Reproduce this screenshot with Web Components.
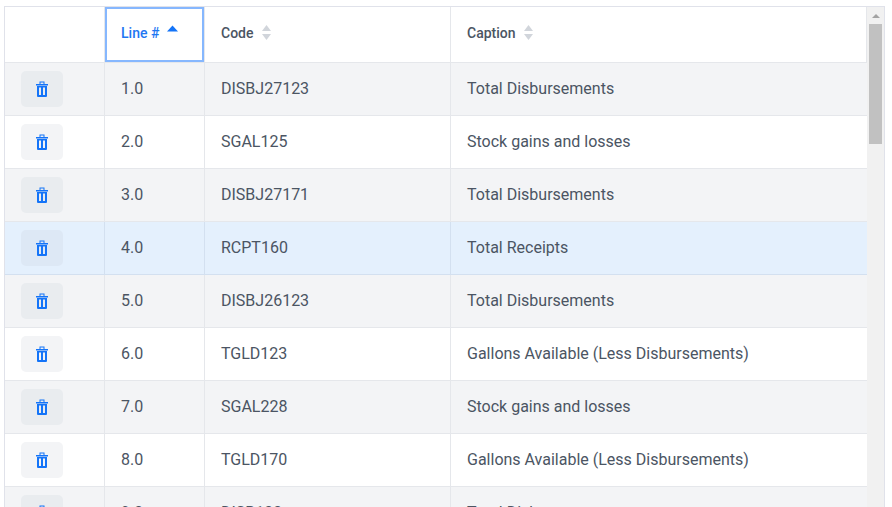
<!DOCTYPE html>
<html>
<head>
<meta charset="utf-8">
<style>
    html, body { margin: 0; height: 100%; overflow: hidden; background: #fff; }
    body { padding: 6px 7px 0 4px; box-sizing: border-box; font-family: 'Roboto', sans-serif; }
</style>
</head>
<body>
<line-table id="table"></line-table>

<script>
const COLS = '100px 100px 246px 1fr';

class TrashButton extends HTMLElement {
    constructor() {
        super();
        this.attachShadow({mode: 'open'});
        this.shadowRoot.innerHTML = `
        <style>
            :host { display: flex; align-items: center; justify-content: center; width: 42px; height: 36px; border-radius: 5px; background: var(--btn-bg, #f3f4f6); }
            svg { display: block; width: 12px; height: 16px; }
        </style>
        <svg viewBox="0 0 12 16" fill="#1474f8">
            <path d="M0 3h12v1.500H0z"/>
            <path d="M3.500 3V.6h5V3H7.500V1.600h-3V3z"/>
            <path fill-rule="evenodd" d="M1 5h10v10a1 1 0 0 1-1 1H2a1 1 0 0 1-1-1zM3 6.500V14h2V6.500zm4 0V14h2V6.500z"/>
        </svg>`;
    }
}

class SortCaret extends HTMLElement {
    constructor() {
        super();
        this.attachShadow({mode: 'open'});
        const active = this.hasAttribute('active');
        this.shadowRoot.innerHTML = `
        <style>
            :host { display: inline-block; margin-left: 7.5px; }
            svg { display: block; width: 11px; height: 15px; }
        </style>
        ${active
            ? `<svg viewBox="0 0 11 15" style="margin-top:-6px"><path d="M5.500 3.500L11 9.500H0z" fill="#1474f8"/></svg>`
            : `<svg viewBox="0 0 11 15" fill="#d1d5db"><path d="M5.500 0L10 6H1z"/><path d="M5.500 15L1 9h9z"/></svg>`}`;
    }
}

class HeadCell extends HTMLElement {
    constructor() {
        super();
        this.attachShadow({mode: 'open'});
        const sorted = this.hasAttribute('sorted');
        const caret = this.hasAttribute('nosort') ? '' : `<sort-caret ${sorted ? 'active' : ''}></sort-caret>`;
        this.shadowRoot.innerHTML = `
        <style>
            :host { display: flex; align-items: center; box-sizing: border-box; padding: 0 0 4px 16px; font-size: 14px; font-weight: 500; color: ${sorted ? '#1f77f2' : '#4b5563'}; border-right: 1px solid #e5e7eb; }
            :host([sorted]) { box-shadow: inset 0 0 0 2px #86b7fe; }
        </style>
        <slot></slot>${caret}`;
    }
}

class BodyRow extends HTMLElement {
    constructor() {
        super();
        this.attachShadow({mode: 'open'});
        this.shadowRoot.innerHTML = `
        <style>
            :host { display: grid; grid-template-columns: ${COLS}; height: 53px; box-sizing: border-box; border-bottom: 1px solid #e5e7eb; background: #fff; --btn-bg: #f3f4f6; }
            :host([striped]) { background: #f3f4f6; --btn-bg: #e9ecef; }
            :host([active]) { background: #e4f0fd; --btn-bg: #dde8f5; border-bottom-color: #d3e0f0; }
            div { display: flex; align-items: center; padding: 0 0 2px 16px; border-right: 1px solid #e5e7eb; font-size: 16px; color: #4b5563; white-space: nowrap; }
            div:first-of-type { padding-bottom: 0; }
            div:last-child { border-right: 0; }
            :host([active]) div { border-right-color: #d3e0f0; }
        </style>
        <div><trash-button></trash-button></div>
        <div>${this.getAttribute('line')}</div>
        <div>${this.getAttribute('code')}</div>
        <div>${this.getAttribute('caption')}</div>`;
    }
}

class ScrollBar extends HTMLElement {
    constructor() {
        super();
        this.attachShadow({mode: 'open'});
        this.shadowRoot.innerHTML = `
        <style>
            :host { display: flex; flex-direction: column; align-items: center; width: 17px; flex: none; background: #f1f1f1; }
            .arrow { height: 17px; width: 100%; display: flex; align-items: center; justify-content: center; flex: none; }
            .arrow i { width: 0; height: 0; border: 4px solid transparent; border-top: 0; border-bottom: 4px solid #a3a3a3; }
            .thumb { width: 13px; height: 120px; background: #c1c1c1; flex: none; }
        </style>
        <div class="arrow"><i></i></div>
        <div class="thumb"></div>`;
    }
}

class LineTable extends HTMLElement {
    constructor() {
        super();
        this.attachShadow({mode: 'open'});
        const lines = [
            ['1.0', 'DISBJ27123', 'Total Disbursements'],
            ['2.0', 'SGAL125', 'Stock gains and losses'],
            ['3.0', 'DISBJ27171', 'Total Disbursements'],
            ['4.0', 'RCPT160', 'Total Receipts'],
            ['5.0', 'DISBJ26123', 'Total Disbursements'],
            ['6.0', 'TGLD123', 'Gallons Available (Less Disbursements)'],
            ['7.0', 'SGAL228', 'Stock gains and losses'],
            ['8.0', 'TGLD170', 'Gallons Available (Less Disbursements)'],
            ['9.0', 'DISB100', 'Total Disbursements']
        ];
        const rows = lines.map((l, i) => {
            const flag = i === 3 ? 'active' : (i % 2 === 0 ? 'striped' : '');
            return `<body-row ${flag} line="${l[0]}" code="${l[1]}" caption="${l[2]}"></body-row>`;
        }).join('');
        this.shadowRoot.innerHTML = `
        <style>
            :host { display: flex; height: 510px; box-sizing: border-box; border: 1px solid #e0e2ea; border-bottom: 0; overflow: hidden; }
            .main { flex: 1; min-width: 0; }
            .head { display: grid; grid-template-columns: ${COLS}; height: 56px; border-bottom: 1px solid #e5e7eb; box-sizing: border-box; }
        </style>
        <div class="main">
            <div class="head">
                <head-cell nosort></head-cell>
                <head-cell sorted>Line #</head-cell>
                <head-cell>Code</head-cell>
                <head-cell>Caption</head-cell>
            </div>
            ${rows}
        </div>
        <scroll-bar></scroll-bar>`;
    }
}

window.customElements.define('trash-button', TrashButton);
window.customElements.define('sort-caret', SortCaret);
window.customElements.define('head-cell', HeadCell);
window.customElements.define('body-row', BodyRow);
window.customElements.define('scroll-bar', ScrollBar);
window.customElements.define('line-table', LineTable);
</script>
</body>
</html>
